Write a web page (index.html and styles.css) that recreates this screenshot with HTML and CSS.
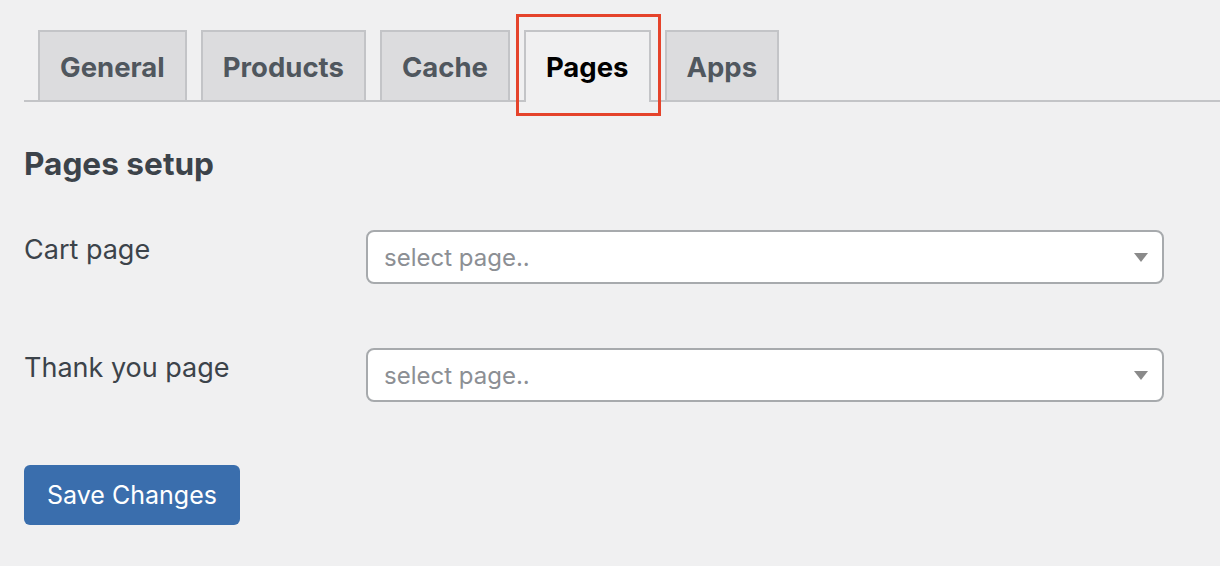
FILE: index.html
```html
<!DOCTYPE html>
<html>
<head>
<meta charset="utf-8">
<link rel="stylesheet" href="styles.css">
</head>
<body>
<div class="wrap">
  <nav class="tabs">
    <a class="tab">General</a>
    <a class="tab">Products</a>
    <a class="tab">Cache</a>
    <a class="tab active">Pages<span class="highlight"></span></a>
    <a class="tab">Apps</a>
  </nav>
  <h2 class="title">Pages setup</h2>
  <div class="form">
    <div class="row">
      <div class="label">Cart page</div>
      <div class="select"><span class="placeholder">select page..</span><span class="arrow"></span></div>
    </div>
    <div class="row">
      <div class="label">Thank you page</div>
      <div class="select"><span class="placeholder">select page..</span><span class="arrow"></span></div>
    </div>
  </div>
  <button class="btn">Save Changes</button>
</div>
</body>
</html>
```
FILE: styles.css
```css
html, body {
  margin: 0;
  padding: 0;
  background: #f0f0f1;
}
body {
  font-family: Inter, "Liberation Sans", sans-serif;
  color: #3c434a;
}
.wrap {
  padding: 30px 0 0 24px;
}
.tabs {
  display: flex;
  gap: 14px;
  padding-left: 14px;
  border-bottom: 2px solid #c3c4c7;
  height: 70px;
}
.tab {
  position: relative;
  box-sizing: border-box;
  height: 70px;
  padding: 0 20px;
  border: 2px solid #c3c4c7;
  border-bottom: none;
  background: #dcdcde;
  color: #50575e;
  font-size: 27.5px;
  font-weight: 700;
  line-height: 70px;
}
.tab.active {
  background: #f0f0f1;
  color: #000;
  height: 72px;
  margin-bottom: -2px;
}
.highlight {
  position: absolute;
  left: -10px;
  right: -12px;
  top: -18px;
  bottom: -14px;
  border: 3px solid #e5432b;
}
.title {
  margin: 44px 0 0 0;
  font-size: 31.6px;
  font-weight: 700;
  line-height: 36px;
  color: #3c434a;
}
.form {
  margin-top: 48px;
  display: flex;
  flex-direction: column;
  gap: 64px;
}
.row {
  display: flex;
  align-items: flex-start;
}
.label {
  width: 342px;
  font-size: 27px;
  line-height: 40px;
}
.select {
  box-sizing: border-box;
  width: 798px;
  height: 54px;
  border: 2px solid #a7aaad;
  border-radius: 8px;
  background: #fff;
  display: flex;
  align-items: center;
  justify-content: space-between;
  padding: 0 14px 0 16px;
}
.placeholder {
  color: #8c8f94;
  font-size: 24px;
}
.arrow {
  width: 0;
  height: 0;
  border-left: 7px solid transparent;
  border-right: 7px solid transparent;
  border-top: 9px solid #8a8a8a;
}
.btn {
  margin-top: 63px;
  width: 216px;
  height: 60px;
  border: none;
  border-radius: 6px;
  background: #3a6ead;
  color: #fff;
  font-family: Inter, "Liberation Sans", sans-serif;
  font-size: 25px;
  padding: 0;
}
```
